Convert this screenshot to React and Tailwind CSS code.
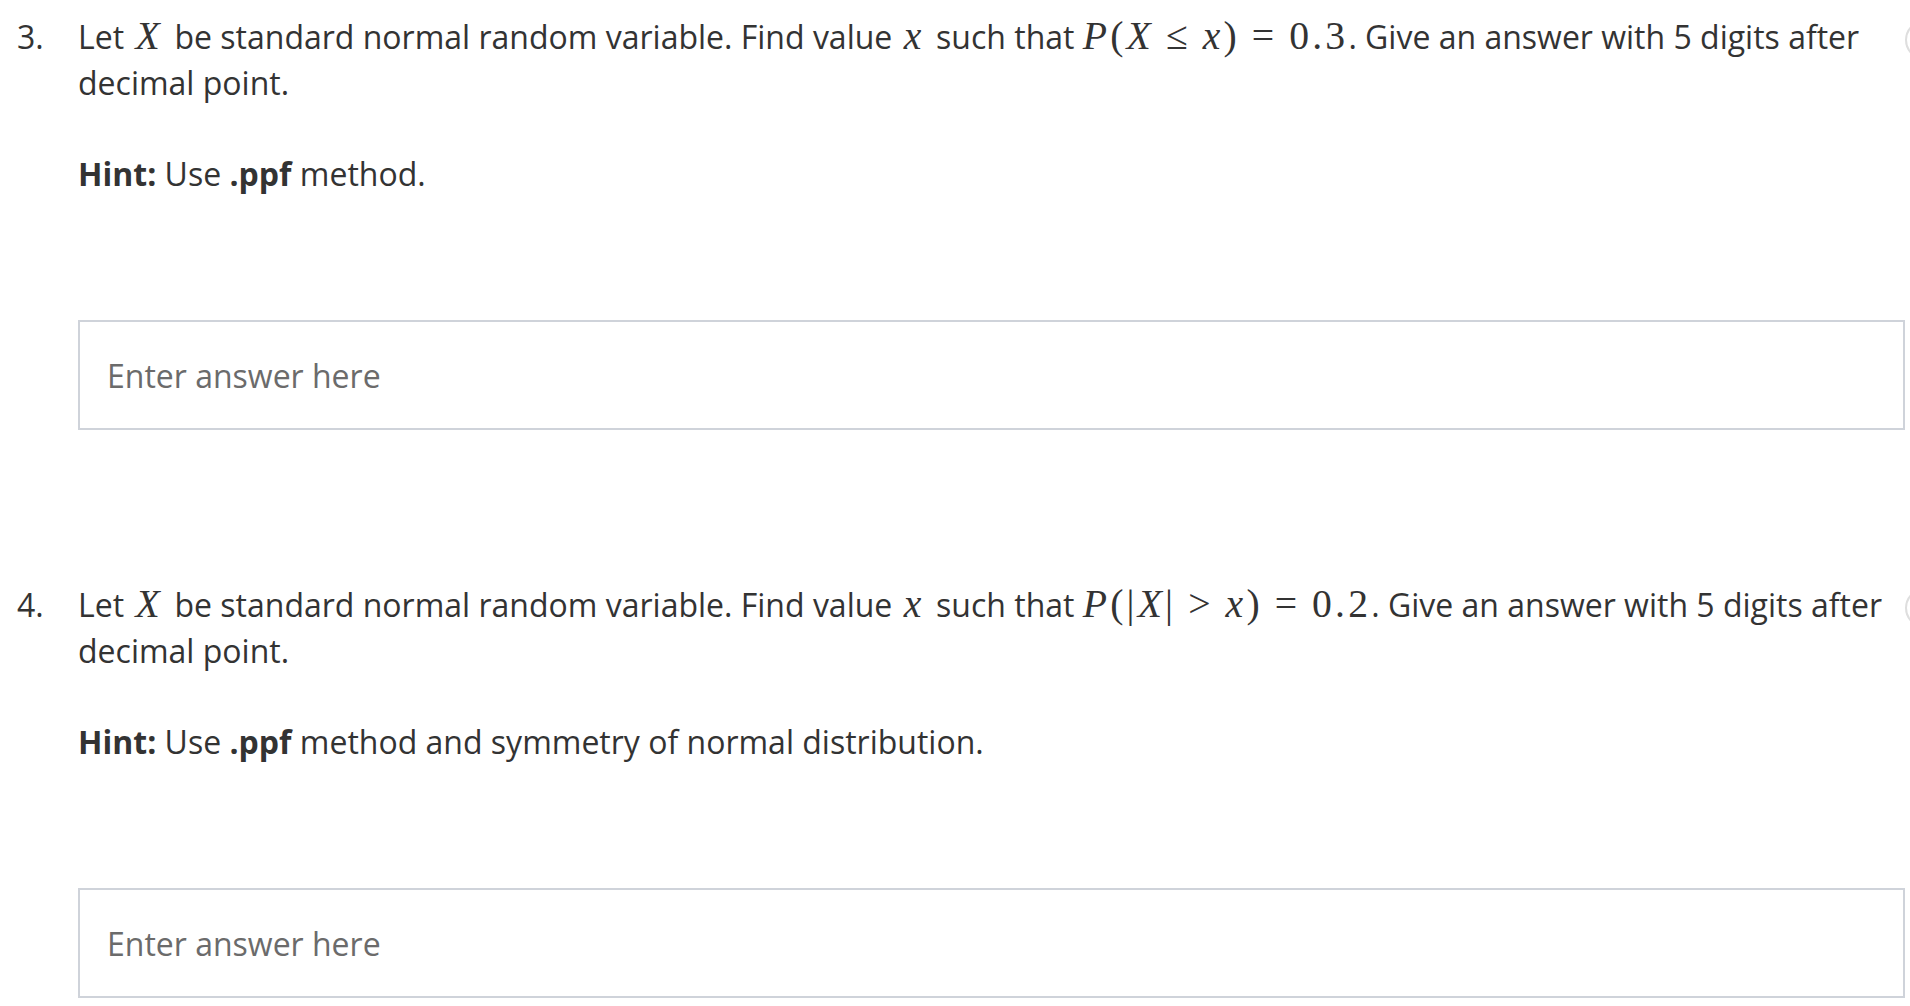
import React from "react";

const mathFont = { fontFamily: '"Liberation Serif", "DejaVu Serif", serif' };

// italic math variable
const V = ({ children }) => (
  <span className="italic" style={mathFont}>
    {children}
  </span>
);

// upright math symbol
const U = ({ children, className = "" }) => (
  <span className={className} style={mathFont}>
    {children}
  </span>
);

const M = ({ children, className = "" }) => (
  <span
    className={`text-[1.24em] leading-[1] tracking-[0.08em] whitespace-nowrap ${className}`}
  >
    {children}
  </span>
);

const Rel = ({ children }) => <U className="mx-[0.3em]">{children}</U>;

const Question = ({ num, formula, hint, first }) => (
  <div className={`flex ${first ? "pt-[14px]" : "mt-[152px]"}`}>
    <div className="w-[78px] shrink-0 pl-[17px]">{num}.</div>
    <div className="w-[1827px] shrink-0">
      <p>
        Let <M className="mx-[0.08em]"><V>X</V></M> be standard normal random
        variable. Find value <M className="mx-[0.08em]"><V>x</V></M> such that{" "}
        {formula}. Give an answer with 5 digits after
        <br />
        decimal point.
      </p>
      <p className="mt-[45px]">
        <b className="font-bold">Hint:</b> Use <b className="font-bold">.ppf</b>{" "}
        {hint}
      </p>
      <input
        type="text"
        placeholder="Enter answer here"
        className="mt-[123px] block w-full h-[110px] border-2 border-[#cfd3da] px-[27px] text-[32px] text-[#333] placeholder:text-[#6b6b6b] outline-none bg-white"
      />
    </div>
    <div className="w-[40px] shrink-0 pt-[6px]">
      <div className="w-[40px] h-[40px] rounded-full border-2 border-[#dedede]" />
    </div>
  </div>
);

export default function App() {
  return (
    <div
      className="w-[1910px] h-[1006px] overflow-hidden bg-white text-[#333333] text-[32px] leading-[46px]"
      style={{ fontFamily: '"Open Sans", "Noto Sans", sans-serif' }}
    >
      <Question
        first
        num={3}
        formula={
          <M>
            <V>P</V>
            <U>(</U>
            <V>X</V>
            <Rel>≤</Rel>
            <V>x</V>
            <U>)</U>
            <Rel>=</Rel>
            <U>0.3</U>
          </M>
        }
        hint="method."
      />
      <Question
        num={4}
        formula={
          <M>
            <V>P</V>
            <U>(|</U>
            <V>X</V>
            <U>|</U>
            <Rel>&gt;</Rel>
            <V>x</V>
            <U>)</U>
            <Rel>=</Rel>
            <U>0.2</U>
          </M>
        }
        hint="method and symmetry of normal distribution."
      />
    </div>
  );
}
